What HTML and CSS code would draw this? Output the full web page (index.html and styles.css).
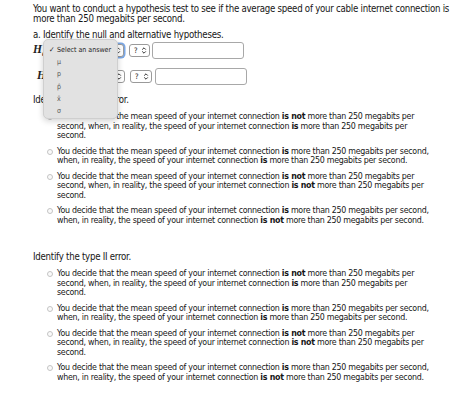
FILE: index.html
```html
<!DOCTYPE html>
<html>
<head>
<meta charset="utf-8">
<link rel="stylesheet" href="styles.css">
</head>
<body>
<div class="page">
  <p class="q-text">You want to conduct a hypothesis test to see if the average speed of your cable internet connection is more than 250 megabits per second.</p>

  <p class="q-part">a. Identify the null and alternative hypotheses.</p>

  <div class="hyp">
    <div class="hyp-row">
      <span class="h-label">H<sub>0</sub></span>
      <span class="sel sel-param sel-focus"><span class="sel-val"></span><svg class="arr" viewBox="0 0 6 10"><path d="M1 4 L3 2 L5 4 M1 6 L3 8 L5 6" fill="none" stroke="#333" stroke-width="1.1"/></svg></span>
      <span class="sel sel-op"><span class="sel-val">?</span><svg class="arr" viewBox="0 0 6 10"><path d="M1 4 L3 2 L5 4 M1 6 L3 8 L5 6" fill="none" stroke="#333" stroke-width="1.1"/></svg></span>
      <span class="inp"></span>
    </div>
    <div class="hyp-row hyp-row-alt">
      <span class="h-label">H<sub>a</sub></span>
      <span class="sel sel-param"><span class="sel-val"></span><svg class="arr" viewBox="0 0 6 10"><path d="M1 4 L3 2 L5 4 M1 6 L3 8 L5 6" fill="none" stroke="#333" stroke-width="1.1"/></svg></span>
      <span class="sel sel-op"><span class="sel-val">?</span><svg class="arr" viewBox="0 0 6 10"><path d="M1 4 L3 2 L5 4 M1 6 L3 8 L5 6" fill="none" stroke="#333" stroke-width="1.1"/></svg></span>
      <span class="inp"></span>
    </div>

    <ul class="menu">
      <li class="menu-item menu-checked"><span class="check">✓</span>Select an answer</li>
      <li class="menu-item">μ</li>
      <li class="menu-item">p</li>
      <li class="menu-item">p̂</li>
      <li class="menu-item">x̄</li>
      <li class="menu-item">σ</li>
    </ul>
  </div>

  <p class="q-part q-type1">Identify the type I error.</p>
  <ul class="opts">
    <li class="opt"><span class="radio"></span><span class="opt-text">You decide that the mean speed of your internet connection <b>is not</b> more than 250 megabits per second, when, in reality, the speed of your internet connection <b>is</b> more than 250 megabits per second.</span></li>
    <li class="opt"><span class="radio"></span><span class="opt-text">You decide that the mean speed of your internet connection <b>is</b> more than 250 megabits per second, when, in reality, the speed of your internet connection <b>is</b> more than 250 megabits per second.</span></li>
    <li class="opt"><span class="radio"></span><span class="opt-text">You decide that the mean speed of your internet connection <b>is not</b> more than 250 megabits per second, when, in reality, the speed of your internet connection <b>is not</b> more than 250 megabits per second.</span></li>
    <li class="opt"><span class="radio"></span><span class="opt-text">You decide that the mean speed of your internet connection <b>is</b> more than 250 megabits per second, when, in reality, the speed of your internet connection <b>is not</b> more than 250 megabits per second.</span></li>
  </ul>

  <p class="q-part q-type2">Identify the type II error.</p>
  <ul class="opts">
    <li class="opt"><span class="radio"></span><span class="opt-text">You decide that the mean speed of your internet connection <b>is not</b> more than 250 megabits per second, when, in reality, the speed of your internet connection <b>is</b> more than 250 megabits per second.</span></li>
    <li class="opt"><span class="radio"></span><span class="opt-text">You decide that the mean speed of your internet connection <b>is</b> more than 250 megabits per second, when, in reality, the speed of your internet connection <b>is</b> more than 250 megabits per second.</span></li>
    <li class="opt"><span class="radio"></span><span class="opt-text">You decide that the mean speed of your internet connection <b>is not</b> more than 250 megabits per second, when, in reality, the speed of your internet connection <b>is not</b> more than 250 megabits per second.</span></li>
    <li class="opt"><span class="radio"></span><span class="opt-text">You decide that the mean speed of your internet connection <b>is</b> more than 250 megabits per second, when, in reality, the speed of your internet connection <b>is not</b> more than 250 megabits per second.</span></li>
  </ul>
</div>
</body>
</html>
```
FILE: styles.css
```css
html, body {
  margin: 0;
  padding: 0;
  background: #ffffff;
}

.page {
  padding: 4px 0 0 33px;
  width: 428px;
  font-family: "DejaVu Sans Condensed", "DejaVu Sans", sans-serif;
  color: #161616;
}

.q-text {
  margin: 0;
  font-size: 9.6px;
  letter-spacing: -0.25px;
  line-height: 10px;
}

.q-part {
  margin: 6px 0 0 0;
  font-size: 9.6px;
  letter-spacing: -0.25px;
  line-height: 10px;
}

/* hypotheses block */
.hyp {
  position: relative;
  margin-top: 2px;
  display: flex;
  flex-direction: column;
  gap: 9px;
}

.hyp-row {
  display: flex;
  align-items: center;
  height: 17px;
}

.h-label {
  width: 16px;
  font-family: "Liberation Serif", serif;
  font-style: italic;
  font-weight: bold;
  font-size: 11.5px;
  color: #222;
}

.h-label sub {
  font-size: 7px;
}

.hyp-row-alt .h-label {
  width: 13px;
  padding-left: 4px;
}

.sel {
  box-sizing: border-box;
  height: 13px;
  border: 1px solid #9a9a9a;
  border-radius: 3px;
  background: #fff;
  display: flex;
  align-items: center;
  justify-content: space-between;
  padding: 0 2px 0 4px;
  font-size: 7.5px;
  color: #222;
}

.sel-param {
  width: 75px;
}

.sel-focus {
  box-shadow: 0 0 0 1.5px #7aa7e6;
}

.sel-op {
  width: 21px;
  margin-left: 5px;
}

.hyp-row-alt .sel-op {
  width: 22px;
}

.arr {
  width: 6px;
  height: 9px;
}

.inp {
  box-sizing: border-box;
  width: 92px;
  height: 17px;
  margin-left: 2px;
  border: 1px solid #a8a8a8;
  border-radius: 3px;
  background: #fff;
}

.hyp-row-alt .inp {
  margin-left: 3px;
}

/* open dropdown */
.menu {
  position: absolute;
  left: 10px;
  top: -3px;
  width: 75px;
  height: 80px;
  box-sizing: border-box;
  margin: 0;
  padding: 4px 0 0 0;
  list-style: none;
  background: #e2e2e2;
  border: 1px solid #cfcfcf;
  border-radius: 5px;
  box-shadow: 0 2px 6px rgba(0, 0, 0, 0.18);
  font-family: "DejaVu Sans Condensed", "DejaVu Sans", sans-serif;
  font-size: 7px;
  color: #555;
}

.menu-item {
  height: 12.2px;
  line-height: 12.2px;
  padding-left: 13px;
  position: relative;
}

.menu-checked {
  color: #222;
}

.check {
  position: absolute;
  left: 5px;
  font-size: 7.5px;
}

/* question parts */
.q-type1 {
  margin-top: 10px;
}

.q-type2 {
  margin-top: 27px;
}

.opts {
  list-style: none;
  margin: 7px 0 0 0;
  padding: 0 0 0 14px;
  display: flex;
  flex-direction: column;
  gap: 6px;
  width: 389px;
}

.opt {
  display: flex;
  align-items: flex-start;
  font-size: 8.8px;
  letter-spacing: -0.27px;
  line-height: 9.5px;
}

.opt b {
  font-weight: bold;
}

.radio {
  box-sizing: border-box;
  flex: none;
  width: 6px;
  height: 6px;
  margin: 2px 4px 0 0;
  border: 1px solid #c4c4c4;
  border-radius: 50%;
  background: #fafafa;
}

.opt-text {
  flex: 1;
}
```
